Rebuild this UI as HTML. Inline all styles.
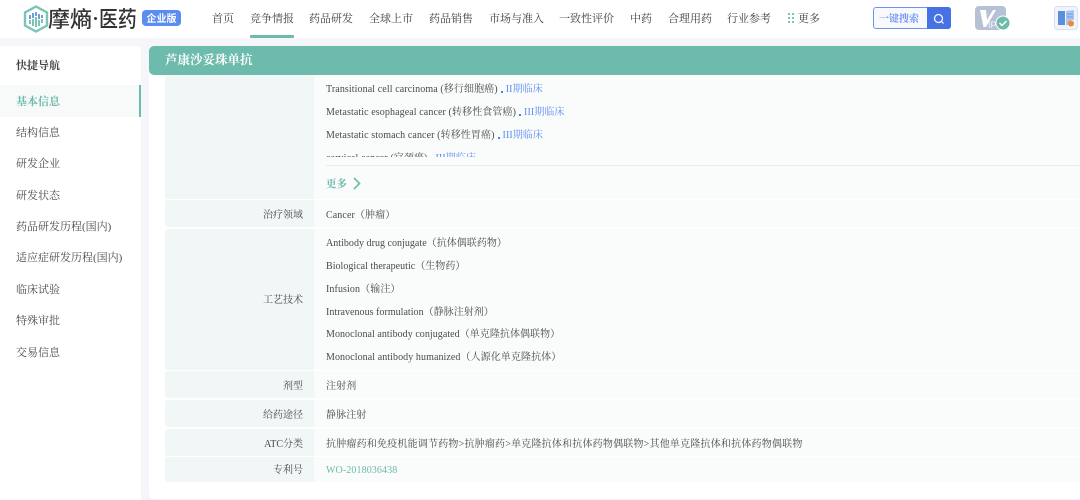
<!DOCTYPE html>
<html lang="zh"><head><meta charset="utf-8"><style>
*{box-sizing:border-box}
html,body{margin:0;padding:0}
body{width:1080px;height:500px;overflow:hidden;background:#f5f6f9;position:relative;font-family:"Liberation Serif","Noto Serif CJK SC",serif;color:#444}
.a{position:absolute;white-space:nowrap}
.nav{top:11px;font-size:11px;line-height:16px;color:#3f3f3f}
.side{left:16px;font-size:11px;line-height:16px;color:#4c4c4c}
.t{left:326px;font-size:10px;line-height:14px;color:#4a4a4a;letter-spacing:.1px}
.l{left:165px;width:138px;text-align:right;font-size:10px;line-height:14px;color:#4a4a4a}
.c{color:#5b8cf5}
.lc{position:absolute;left:165px;width:149px;background:#f1f6f6;border-radius:3px 0 0 3px}
.rc{position:absolute;left:314px;width:766px;background:#fafbfb}
.dot{display:inline-block;width:2px;height:2px;background:#4a7df0;margin:0 3px 0 3px;vertical-align:-1px}
.logo{font:500 22px/28px "Noto Sans CJK SC",sans-serif;color:#333;top:4px}
</style></head><body>
<div class="a" style="left:0;top:0;width:1080px;height:38px;background:#fff"></div>
<svg class="a" style="left:23px;top:5px" width="26" height="28" viewBox="0 0 26 28"><path d="M13 1.500 24 7.500V20.500L13 26.500 2 20.500V7.500Z" fill="none" stroke="#7cc5b6" stroke-width="2.400"/><g fill="#6f9fd8"><rect x="6" y="10" width="2" height="4"/><rect x="9" y="8" width="2" height="5"/><rect x="12" y="7" width="2" height="4"/><rect x="15" y="9" width="2" height="5"/><rect x="18" y="10" width="2" height="3"/></g><g fill="#7cc5b6"><rect x="6" y="15" width="2" height="4"/><rect x="9" y="14" width="2" height="7"/><rect x="12" y="12" width="2" height="10"/><rect x="15" y="15" width="2" height="6"/><rect x="18" y="14" width="2" height="4"/></g></svg>
<div class="a logo" style="left:48px">摩熵</div>
<div class="a" style="left:94px;top:17px;width:3px;height:3px;border-radius:50%;background:#333"></div>
<div class="a logo" style="left:99px;transform:scaleX(.86);transform-origin:0 0">医药</div>
<div class="a" style="left:142px;top:10px;width:39px;height:16px;background:#5b8cf0;border-radius:4px;color:#fff;font:700 10px/16px 'Noto Sans CJK SC',sans-serif;text-align:center">企业版</div>
<div class="a nav" style="left:212px">首页</div>
<div class="a nav" style="left:250px">竞争情报</div>
<div class="a" style="left:250px;top:35px;width:44px;height:3px;background:#6dbbac;border-radius:1px"></div>
<div class="a nav" style="left:309px">药品研发</div>
<div class="a nav" style="left:369px">全球上市</div>
<div class="a nav" style="left:429px">药品销售</div>
<div class="a nav" style="left:489px">市场与准入</div>
<div class="a nav" style="left:559px">一致性评价</div>
<div class="a nav" style="left:630px">中药</div>
<div class="a nav" style="left:668px">合理用药</div>
<div class="a nav" style="left:727px">行业参考</div>
<svg class="a" style="left:788px;top:13px" width="6" height="11"><g fill="#7cc5b6"><rect width="2" height="2"/><rect x="4" width="2" height="2"/><rect y="4" width="2" height="2"/><rect x="4" y="4" width="2" height="2"/><rect y="8" width="2" height="2"/><rect x="4" y="8" width="2" height="2"/></g></svg>
<div class="a nav" style="left:798px">更多</div>
<div class="a" style="left:873px;top:7px;width:78px;height:22px;border:1px solid #6f94ea;border-radius:3px;background:#f7f9ff"></div>
<div class="a" style="left:879px;top:13px;font:700 10px/14px 'Liberation Serif','Noto Serif CJK SC',serif;color:#6f94ea">一键搜索</div>
<div class="a" style="left:927px;top:7px;width:24px;height:22px;background:#4672e6;border-radius:0 3px 3px 0"></div>
<svg class="a" style="left:932px;top:12px" width="14" height="14" fill="none" stroke="#fff" stroke-width="1.200"><circle cx="6.500" cy="6.500" r="4"/><path d="M9.500 9.500 11.500 11.500"/></svg>
<svg class="a" style="left:974px;top:5px" width="38" height="27" viewBox="0 0 38 27"><rect x="1" y="1" width="31" height="24" rx="4" fill="#b7c1d5"/><path d="M6 5H12L13 15 19 5H22L12 22H9.500Z" fill="#fff"/><text x="14" y="23" font-size="9" fill="#f2f4f9" font-family="Liberation Sans">IP</text><circle cx="29" cy="18" r="7" fill="#6dbbac" stroke="#fff"/><path d="M25.500 18 28 20.500 32.500 16" fill="none" stroke="#fff" stroke-width="1.500"/></svg>
<svg class="a" style="left:1054px;top:6px" width="24" height="24" viewBox="0 0 24 24"><rect x=".5" y=".5" width="23" height="23" rx="3" fill="#f0f4fd" stroke="#d5e0f7"/><path d="M4 5H11V19H4Z" fill="#5b8fdc"/><path d="M12 5 20 4V14H17V19H12Z" fill="#a9c4ee"/><path d="M13 8H19M13 11H19" stroke="#5b8fdc" stroke-width=".7"/><circle cx="17" cy="17.500" r="3" fill="#e88a3c"/></svg>

<div class="a" style="left:0;top:46px;width:141px;height:454px;background:#fff;border-radius:0 5px 0 0"></div>
<div class="a side" style="top:58px;color:#444;font-weight:700">快捷导航</div>
<div class="a" style="left:0;top:85px;width:141px;height:32px;background:#f8faf9"></div>
<div class="a" style="left:139px;top:85px;width:2px;height:32px;background:#6dbbac"></div>
<div class="a side" style="top:94px;color:#6dbbac;font-weight:700">基本信息</div>
<div class="a side" style="top:125px">结构信息</div>
<div class="a side" style="top:156px">研发企业</div>
<div class="a side" style="top:188px">研发状态</div>
<div class="a side" style="top:219px">药品研发历程(国内)</div>
<div class="a side" style="top:250px">适应症研发历程(国内)</div>
<div class="a side" style="top:282px">临床试验</div>
<div class="a side" style="top:313px">特殊审批</div>
<div class="a side" style="top:345px">交易信息</div>

<div class="a" style="left:149px;top:46px;width:931px;height:453px;background:#fff;border-radius:5px 0 0 5px"></div>
<div class="a" style="left:149px;top:46px;width:931px;height:29px;background:#6dbbac;border-radius:5px 0 0 5px"></div>
<div class="a" style="left:165px;top:51px;font-size:12.500px;line-height:18px;font-weight:700;color:#fff">芦康沙妥珠单抗</div>

<div class="lc" style="top:75px;height:124px"></div><div class="rc" style="top:75px;height:124px"></div>
<div class="lc" style="top:200px;height:27px"></div><div class="rc" style="top:200px;height:27px"></div>
<div class="lc" style="top:229px;height:141px"></div><div class="rc" style="top:229px;height:141px"></div>
<div class="lc" style="top:371px;height:27px"></div><div class="rc" style="top:371px;height:27px"></div>
<div class="lc" style="top:400px;height:27px"></div><div class="rc" style="top:400px;height:27px"></div>
<div class="lc" style="top:429px;height:27px"></div><div class="rc" style="top:429px;height:27px"></div>
<div class="lc" style="top:457px;height:25px"></div><div class="rc" style="top:457px;height:25px"></div>

<div class="a t" style="top:83px">Transitional cell carcinoma (移行细胞癌)<span class="dot"></span><span class="c">II期临床</span></div>
<div class="a t" style="top:106px">Metastatic esophageal cancer (转移性食管癌)<span class="dot"></span><span class="c">III期临床</span></div>
<div class="a t" style="top:129px">Metastatic stomach cancer (转移性胃癌)<span class="dot"></span><span class="c">III期临床</span></div>
<div class="a" style="left:326px;top:150px;width:754px;height:7px;overflow:hidden"><div class="a t" style="left:0;top:2px">cervical cancer (宫颈癌)<span class="dot"></span><span class="c">III期临床</span></div></div>
<div class="a" style="left:326px;top:165px;width:754px;height:1px;background:#e8ecf2"></div>
<div class="a" style="left:326px;top:177px;font-size:10.500px;line-height:15px;color:#6dbbac;font-weight:700">更多</div>
<svg class="a" style="left:352px;top:177px" width="10" height="13" fill="none" stroke="#6dbbac" stroke-width="1.600"><path d="M2 1 7.500 6.500 2 12"/></svg>

<div class="a l" style="top:209px">治疗领域</div><div class="a t" style="top:209px">Cancer（肿瘤）</div>
<div class="a l" style="top:294px">工艺技术</div>
<div class="a t" style="top:237px;letter-spacing:.03px">Antibody drug conjugate（抗体偶联药物）</div>
<div class="a t" style="top:260px;letter-spacing:.03px">Biological therapeutic（生物药）</div>
<div class="a t" style="top:283px">Infusion（输注）</div>
<div class="a t" style="top:306px;letter-spacing:.03px">Intravenous formulation（静脉注射剂）</div>
<div class="a t" style="top:328px;letter-spacing:.05px">Monoclonal antibody conjugated（单克隆抗体偶联物）</div>
<div class="a t" style="top:351px;letter-spacing:.08px">Monoclonal antibody humanized（人源化单克隆抗体）</div>
<div class="a l" style="top:380px">剂型</div><div class="a t" style="top:380px">注射剂</div>
<div class="a l" style="top:409px">给药途径</div><div class="a t" style="top:409px">静脉注射</div>
<div class="a l" style="top:438px">ATC分类</div><div class="a t" style="top:438px;letter-spacing:.2px">抗肿瘤药和免疫机能调节药物&gt;抗肿瘤药&gt;单克隆抗体和抗体药物偶联物&gt;其他单克隆抗体和抗体药物偶联物</div>
<div class="a l" style="top:464px">专利号</div><div class="a t" style="top:464px;color:#6dbbac">WO-2018036438</div>
</body></html>
